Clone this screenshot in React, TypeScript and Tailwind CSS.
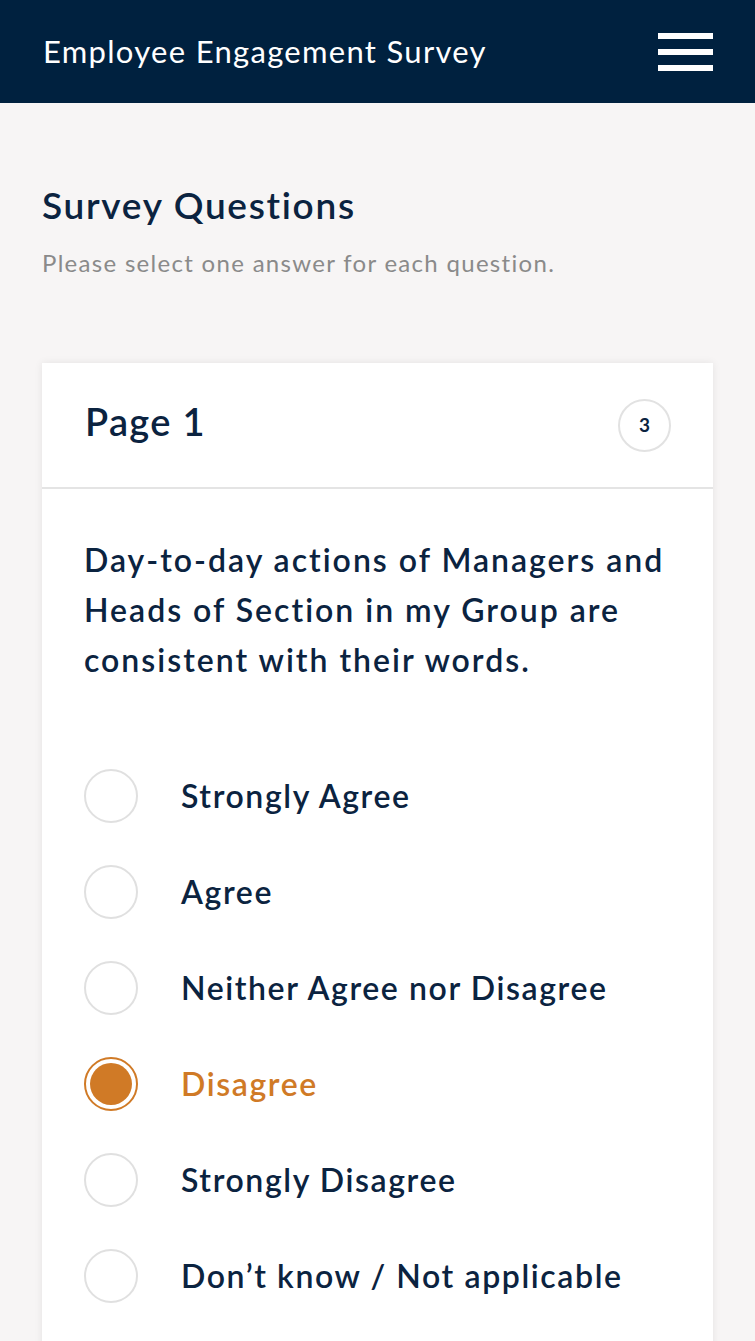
import { useState } from "react";

const OPTIONS = [
  "Strongly Agree",
  "Agree",
  "Neither Agree nor Disagree",
  "Disagree",
  "Strongly Disagree",
  "Don\u2019t know / Not applicable",
];

export default function App() {
  const [selected, setSelected] = useState("Disagree");

  return (
    <div
      className="min-h-[1341px] bg-[#f7f5f5] text-[#0b2340]"
      style={{ fontFamily: "Lato, 'Open Sans', sans-serif" }}
    >
      <header className="flex h-[103px] items-center justify-between bg-[#00213f] pl-[43px] pr-[42px]">
        <h1 className="text-[31px] tracking-[1.3px] text-white">
          Employee Engagement Survey
        </h1>
        <button type="button" className="flex flex-col gap-[10px]">
          <span className="block h-[6px] w-[55px] bg-white" />
          <span className="block h-[6px] w-[55px] bg-white" />
          <span className="block h-[6px] w-[55px] bg-white" />
        </button>
      </header>

      <div className="px-[42px] pt-[80px]">
        <h2 className="text-[37px] font-semibold leading-[44px] tracking-[1.7px]">
          Survey Questions
        </h2>
        <p className="mt-[18px] text-[24px] tracking-[1.3px] text-[#8a8a8a]">
          Please select one answer for each question.
        </p>

        <div className="mt-[82px] bg-white shadow-[0_0_8px_rgba(0,0,0,0.08)]">
          <div className="flex h-[126px] items-center justify-between border-b-2 border-[#e4e4e4] pl-[43px] pr-[42px]">
            <span className="mb-[8px] text-[38px] font-semibold tracking-[1.3px]">
              Page 1
            </span>
            <span className="flex h-[53px] w-[53px] items-center justify-center rounded-full border-2 border-[#e2e2e2] text-[19px] font-bold">
              3
            </span>
          </div>

          <div className="px-[42px] pb-[40px] pt-[46px]">
            <p className="text-[32px] font-semibold leading-[50px] tracking-[2px]">
              Day-to-day actions of Managers and Heads of Section in my Group
              are consistent with their words.
            </p>

            <div className="mt-[63px] flex flex-col">
              {OPTIONS.map((opt) => {
                const on = opt === selected;
                return (
                  <button
                    type="button"
                    key={opt}
                    onClick={() => setSelected(opt)}
                    className="flex h-[96px] items-center gap-[43px] text-left"
                  >
                    <span
                      className={
                        on
                          ? "flex h-[54px] w-[54px] shrink-0 items-center justify-center rounded-full border-2 border-[#d07a26] bg-white"
                          : "flex h-[54px] w-[54px] shrink-0 items-center justify-center rounded-full border-2 border-[#e0e0e0] bg-white"
                      }
                    >
                      {on && (
                        <span className="block h-[42px] w-[42px] rounded-full bg-[#d07a26]" />
                      )}
                    </span>
                    <span
                      className={
                        on
                          ? "text-[32px] font-semibold tracking-[1.6px] text-[#d07a26]"
                          : "text-[32px] font-semibold tracking-[1.6px] text-[#0b2340]"
                      }
                    >
                      {opt}
                    </span>
                  </button>
                );
              })}
            </div>
          </div>
        </div>
      </div>
    </div>
  );
}
